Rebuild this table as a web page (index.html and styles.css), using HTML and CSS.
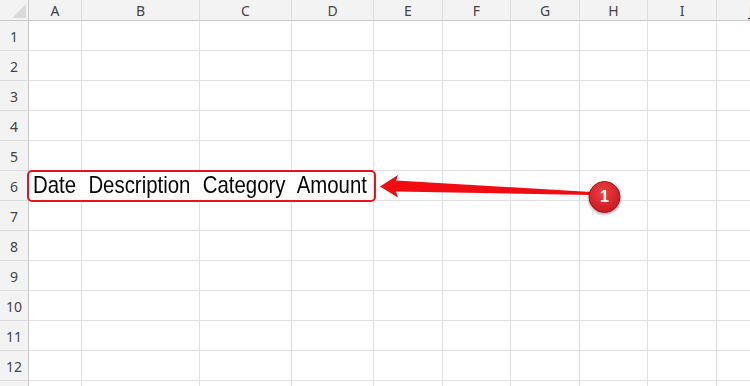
FILE: index.html
```html
<!DOCTYPE html>
<html>
<head>
<meta charset="utf-8">
<link rel="stylesheet" href="styles.css">
</head>
<body>
<div class="sheet">
  <div class="grid">
    <div class="hd corner"><svg width="28" height="20" viewBox="0 0 28 20"><polygon points="26,4 26,18 12,18" fill="#dadada"/></svg></div>
    <div class="hd col">A</div>
    <div class="hd col">B</div>
    <div class="hd col">C</div>
    <div class="hd col">D</div>
    <div class="hd col">E</div>
    <div class="hd col">F</div>
    <div class="hd col">G</div>
    <div class="hd col">H</div>
    <div class="hd col">I</div>
    <div class="hd col">J</div>

    <div class="hd row">1</div><div class="c"></div><div class="c"></div><div class="c"></div><div class="c"></div><div class="c"></div><div class="c"></div><div class="c"></div><div class="c"></div><div class="c"></div><div class="c"></div>
    <div class="hd row">2</div><div class="c"></div><div class="c"></div><div class="c"></div><div class="c"></div><div class="c"></div><div class="c"></div><div class="c"></div><div class="c"></div><div class="c"></div><div class="c"></div>
    <div class="hd row">3</div><div class="c"></div><div class="c"></div><div class="c"></div><div class="c"></div><div class="c"></div><div class="c"></div><div class="c"></div><div class="c"></div><div class="c"></div><div class="c"></div>
    <div class="hd row">4</div><div class="c"></div><div class="c"></div><div class="c"></div><div class="c"></div><div class="c"></div><div class="c"></div><div class="c"></div><div class="c"></div><div class="c"></div><div class="c"></div>
    <div class="hd row">5</div><div class="c"></div><div class="c"></div><div class="c"></div><div class="c"></div><div class="c"></div><div class="c"></div><div class="c"></div><div class="c"></div><div class="c"></div><div class="c"></div>
    <div class="hd row">6</div><div class="c wide"><span class="entry">Date Description Category Amount</span></div><div class="c"></div><div class="c"></div><div class="c"></div><div class="c"></div><div class="c"></div><div class="c"></div>
    <div class="hd row">7</div><div class="c"></div><div class="c"></div><div class="c"></div><div class="c"></div><div class="c"></div><div class="c"></div><div class="c"></div><div class="c"></div><div class="c"></div><div class="c"></div>
    <div class="hd row">8</div><div class="c"></div><div class="c"></div><div class="c"></div><div class="c"></div><div class="c"></div><div class="c"></div><div class="c"></div><div class="c"></div><div class="c"></div><div class="c"></div>
    <div class="hd row">9</div><div class="c"></div><div class="c"></div><div class="c"></div><div class="c"></div><div class="c"></div><div class="c"></div><div class="c"></div><div class="c"></div><div class="c"></div><div class="c"></div>
    <div class="hd row">10</div><div class="c"></div><div class="c"></div><div class="c"></div><div class="c"></div><div class="c"></div><div class="c"></div><div class="c"></div><div class="c"></div><div class="c"></div><div class="c"></div>
    <div class="hd row">11</div><div class="c"></div><div class="c"></div><div class="c"></div><div class="c"></div><div class="c"></div><div class="c"></div><div class="c"></div><div class="c"></div><div class="c"></div><div class="c"></div>
    <div class="hd row">12</div><div class="c"></div><div class="c"></div><div class="c"></div><div class="c"></div><div class="c"></div><div class="c"></div><div class="c"></div><div class="c"></div><div class="c"></div><div class="c"></div>
    <div class="hd row"></div><div class="c"></div><div class="c"></div><div class="c"></div><div class="c"></div><div class="c"></div><div class="c"></div><div class="c"></div><div class="c"></div><div class="c"></div><div class="c"></div>
  </div>

  <div class="highlight"></div>
  <svg class="annot" width="750" height="386" viewBox="0 0 750 386">
    <defs>
      <radialGradient id="bub" cx="45%" cy="35%" r="70%">
        <stop offset="0" stop-color="#ee4044"/>
        <stop offset="1" stop-color="#c8161c"/>
      </radialGradient>
      <filter id="sh" x="-40%" y="-40%" width="180%" height="180%">
        <feDropShadow dx="0" dy="1.5" stdDeviation="1.5" flood-color="#000" flood-opacity="0.35"/>
      </filter>
    </defs>
    <polygon points="380,186.5 398,175 396,180.5 591,192 591,195 396,191.5 398,197.5" fill="#f00c10"/>
    <circle cx="604.5" cy="197" r="15.5" fill="url(#bub)" stroke="#a8151a" stroke-width="1" filter="url(#sh)"/>
  </svg>
  <div class="badge">1</div>
</div>
</body>
</html>
```

FILE: styles.css
```css
html, body {
  margin: 0;
  padding: 0;
  background: #ffffff;
}

.sheet {
  position: relative;
  width: 750px;
  height: 386px;
  overflow: hidden;
  font-family: "Noto Sans", "Open Sans", sans-serif;
}

.grid {
  display: grid;
  grid-template-columns: 29px 53px 118px 92px 82px 69px 68px 69px 68px 69px 69px;
  grid-template-rows: 21px repeat(13, 30px);
}

.hd {
  background: #f3f3f3;
  color: #444444;
  font-size: 14px;
  display: flex;
  align-items: center;
  justify-content: center;
  box-sizing: border-box;
}

.corner {
  border-right: 1px solid #c8c8c8;
  border-bottom: 1px solid #c8c8c8;
  align-items: flex-start;
  justify-content: flex-start;
}

.col {
  border-right: 1px solid #dcdcdc;
  border-bottom: 1px solid #c8c8c8;
  padding-top: 1px;
}

.row {
  border-right: 1px solid #c8c8c8;
  border-bottom: 1px solid #dcdcdc;
  padding-top: 2px;
}

.c {
  box-sizing: border-box;
  border-right: 1px solid #e1e1e1;
  border-bottom: 1px solid #e1e1e1;
  background: #ffffff;
}

.wide {
  grid-column: span 4;
  display: flex;
  align-items: flex-end;
  padding-left: 4px;
  padding-bottom: 1px;
  white-space: nowrap;
}

.entry {
  display: inline-block;
  font-family: "Liberation Sans", Arial, sans-serif;
  font-size: 24px;
  line-height: 28px;
  color: #050505;
  word-spacing: 7.8px;
  transform: scaleX(0.85);
  transform-origin: left bottom;
}

.highlight {
  position: absolute;
  left: 27px;
  top: 170px;
  width: 349px;
  height: 32px;
  box-sizing: border-box;
  border: 2px solid #e8141c;
  border-radius: 5px;
}

.annot {
  position: absolute;
  left: 0;
  top: 0;
  pointer-events: none;
}

.badge {
  position: absolute;
  left: 589px;
  top: 181.5px;
  width: 31px;
  height: 31px;
  display: flex;
  align-items: center;
  justify-content: center;
  color: #ffffff;
  font-family: "Liberation Sans", Arial, sans-serif;
  font-weight: bold;
  font-size: 16px;
}
```
